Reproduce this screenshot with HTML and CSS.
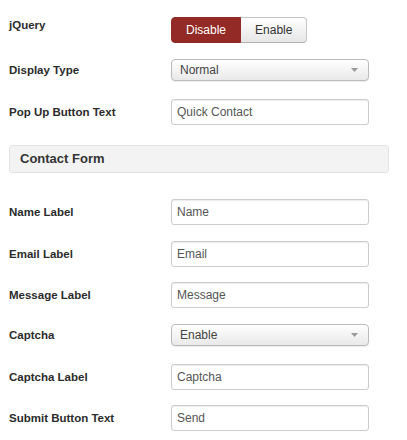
FILE: index.html
```html
<!DOCTYPE html>
<html lang="en">
<head>
    <meta charset="UTF-8">
    <meta name="viewport" content="width=device-width, initial-scale=1.0">
    <title>Quick Contact - Options</title>
    <link rel="stylesheet" href="styles.css">
</head>
<body>

    <form class="options">
        <div class="row row-top">
            <label class="label">jQuery</label>
            <div class="btn-group">
                <button type="button" class="btn btn-active">Disable</button>
                <button type="button" class="btn">Enable</button>
            </div>
        </div>
        <div class="row row-select">
            <label class="label">Display Type</label>
            <div class="select-wrap">
                <select class="select">
                    <option>Normal</option>
                </select>
                <svg class="arrow" width="7" height="4" viewBox="0 0 7 4"><path d="M0 0h7L3.5 4z" fill="#999"/></svg>
            </div>
        </div>
        <div class="row">
            <label class="label">Pop Up Button Text</label>
            <input type="text" class="input" value="Quick Contact">
        </div>

        <!-- contact form section -->
        <div class="section">Contact Form</div>

        <div class="row">
            <label class="label">Name Label</label>
            <input type="text" class="input" value="Name">
        </div>
        <div class="row">
            <label class="label">Email Label</label>
            <input type="text" class="input" value="Email">
        </div>
        <div class="row">
            <label class="label">Message Label</label>
            <input type="text" class="input" value="Message">
        </div>
        <div class="row row-select">
            <label class="label">Captcha</label>
            <div class="select-wrap">
                <select class="select">
                    <option>Enable</option>
                </select>
                <svg class="arrow" width="7" height="4" viewBox="0 0 7 4"><path d="M0 0h7L3.5 4z" fill="#999"/></svg>
            </div>
        </div>
        <div class="row">
            <label class="label">Captcha Label</label>
            <input type="text" class="input" value="Captcha">
        </div>
        <div class="row">
            <label class="label">Submit Button Text</label>
            <input type="text" class="input" value="Send">
        </div>
    </form>

</body>
</html>
```

FILE: styles.css
```css
body {
    font-family: "Liberation Sans", Arial, sans-serif;
    font-size: 12px;
    color: #333;
    background-color: #fff;
    margin: 0;
    padding: 0;
}

.options {
    padding: 17px 18px 0 9px;
}

.row {
    display: flex;
    align-items: center;
    margin-bottom: 15.5px;
}

.row-select {
    margin-bottom: 18px;
}

.label {
    width: 162px;
    flex-shrink: 0;
    font-weight: bold;
    font-size: 11.5px;
    color: #2b2b2b;
}

.row-top {
    align-items: flex-start;
    margin-bottom: 16px;
}

.row-top .label {
    padding-top: 2px;
}

.btn-group {
    display: flex;
}

.btn {
    font-family: inherit;
    font-size: 12px;
    height: 26px;
    padding: 0 14px;
    color: #333;
    background: linear-gradient(#fff, #e6e6e6);
    border: 1px solid #c5c5c5;
    border-bottom-color: #b3b3b3;
    cursor: pointer;
    margin: 0;
}

.btn:first-child {
    border-radius: 4px 0 0 4px;
}

.btn:last-child {
    border-radius: 0 4px 4px 0;
    border-left: none;
}

.btn-active {
    background: #942a25;
    border-color: #942a25;
    color: #fff;
}

.select-wrap {
    position: relative;
    width: 198px;
}

.select {
    appearance: none;
    -webkit-appearance: none;
    width: 100%;
    height: 22px;
    font-family: inherit;
    font-size: 12px;
    color: #444;
    padding: 0 8px;
    background: linear-gradient(#fff, #e9e9e9);
    border: 1px solid #bbb;
    border-radius: 4px;
    box-shadow: 0 1px 1px rgba(0, 0, 0, 0.08);
    margin: 0;
}

.arrow {
    position: absolute;
    right: 11px;
    top: 9px;
}

.input {
    box-sizing: border-box;
    width: 198px;
    height: 26px;
    font-family: inherit;
    font-size: 12px;
    color: #555;
    padding: 0 5px;
    border: 1px solid #ccc;
    border-radius: 3px;
    box-shadow: inset 0 1px 1px rgba(0, 0, 0, 0.075);
    margin: 0;
}

.section {
    height: 26px;
    line-height: 26px;
    margin: 20px 0 26px;
    padding: 0 10px;
    background-color: #f3f3f3;
    border: 1px solid #e3e3e3;
    border-radius: 3px;
    font-weight: bold;
    font-size: 13px;
    color: #333;
}
```
